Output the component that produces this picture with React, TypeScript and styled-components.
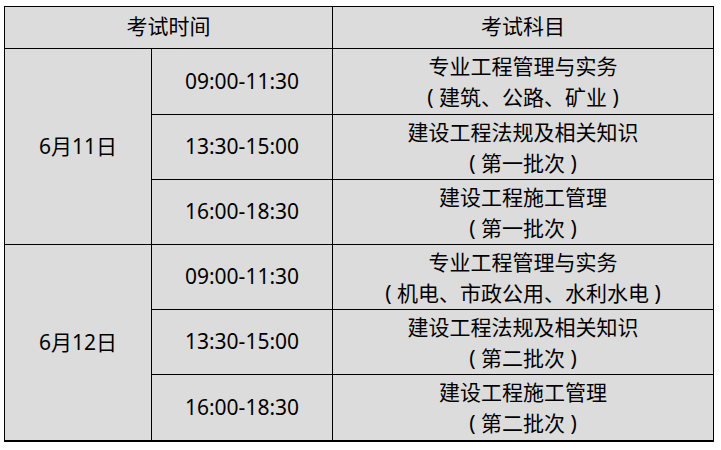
import { Fragment } from "react";
import styled, { createGlobalStyle } from "styled-components";

const GlobalStyle = createGlobalStyle`
    html, body {
        margin: 0;
        padding: 0;
        background: #fff;
    }
    body {
        font-family: "Noto Sans", "Noto Sans CJK SC", sans-serif;
        color: #000;
        overflow: hidden;
    }
`

const Page = styled.div`
    padding: 6px 0 0 4px;
    width: 721px;
    height: 450px;
    box-sizing: border-box;
    overflow: hidden;
`

const Sheet = styled.div`
    display: grid;
    grid-template-columns: 146px 180px 380px;
    grid-template-rows: 41px 65px 64px 64px 64px 64px 65px;
    gap: 1px;
    padding: 1px 1px 2px 1px;
    width: max-content;
    background: #000;
`

const Cell = styled.div`
    background: #dcdcdc;
    display: flex;
    flex-direction: column;
    align-items: center;
    justify-content: center;
    font-size: 21px;
    line-height: 31px;
    white-space: pre;
`

const HeadCell = styled(Cell)<{ $span?: number }>`
    grid-column: span ${p => p.$span ?? 1};
    padding-bottom: 2px;
`

const DateCell = styled(Cell)`
    grid-row: span 3;
`

const TimeCell = styled(Cell)`
    padding-bottom: 1px;
`

const SubjectCell = styled(Cell)`
    padding-top: 1px;
`

const Note = styled.div`
    padding: 3px 0 0 62px;
    font-size: 21px;
    line-height: 30px;
`

type Session = { time: string; subject: string; note: string }

const days: { date: string; sessions: Session[] }[] = [
    {
        date: "6月11日",
        sessions: [
            { time: "09:00-11:30", subject: "专业工程管理与实务", note: "( 建筑、公路、矿业 )" },
            { time: "13:30-15:00", subject: "建设工程法规及相关知识", note: "( 第一批次 )" },
            { time: "16:00-18:30", subject: "建设工程施工管理", note: "( 第一批次 )" },
        ],
    },
    {
        date: "6月12日",
        sessions: [
            { time: "09:00-11:30", subject: "专业工程管理与实务", note: "( 机电、市政公用、水利水电 )" },
            { time: "13:30-15:00", subject: "建设工程法规及相关知识", note: "( 第二批次 )" },
            { time: "16:00-18:30", subject: "建设工程施工管理", note: "( 第二批次 )" },
        ],
    },
]

export default function App() {
    return (
        <Page>
            <GlobalStyle />
            <Sheet>
                <HeadCell $span={2}>考试时间</HeadCell>
                <HeadCell>考试科目</HeadCell>
                {days.map(day => (
                    <Fragment key={day.date}>
                        <DateCell>{day.date}</DateCell>
                        {day.sessions.map(s => (
                            <Fragment key={s.time}>
                                <TimeCell>{s.time}</TimeCell>
                                <SubjectCell>
                                    <span>{s.subject}</span>
                                    <span>{s.note}</span>
                                </SubjectCell>
                            </Fragment>
                        ))}
                    </Fragment>
                ))}
            </Sheet>
            <Note>考试时间均为北京时间。</Note>
        </Page>
    )
}
